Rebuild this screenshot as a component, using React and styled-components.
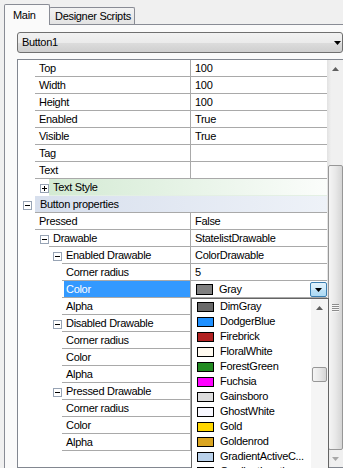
import React from "react";
import styled, { createGlobalStyle } from "styled-components";

const LINE = "#a9a9a9";

const GlobalStyle = createGlobalStyle`
  html, body { margin: 0; padding: 0; }
  body {
    background: #f0f0f0;
    font-family: "Liberation Sans", Arial, sans-serif;
    font-size: 11px;
    letter-spacing: -0.3px;
    color: #000;
  }
  * { box-sizing: border-box; }
`;

const Window = styled.div`
  width: 343px;
  height: 468px;
  overflow: hidden;
  background: #f0f0f0;
`;

const TabStrip = styled.div`
  display: flex;
  align-items: flex-end;
  height: 24px;
  padding-left: 4px;
`;

const Tab = styled.div`
  position: relative;
  z-index: ${(p) => (p.$active ? 2 : 1)};
  width: ${(p) => p.$w}px;
  height: ${(p) => (p.$active ? 21 : 17)}px;
  margin-bottom: ${(p) => (p.$active ? -1 : 0)}px;
  margin-left: ${(p) => (p.$active ? 0 : -1)}px;
  padding-left: ${(p) => (p.$active ? 8 : 5)}px;
  border: 1px solid #898c95;
  border-bottom: none;
  border-radius: 2px 2px 0 0;
  background: ${(p) => (p.$active ? "#fafafa" : "linear-gradient(#f3f3f3, #e3e3e3)")};
  line-height: ${(p) => (p.$active ? 20 : 16)}px;
  white-space: nowrap;
`;

const Page = styled.div`
  height: 444px;
  margin-left: 4px;
  padding: 7px 0 0 12px;
  border-top: 1px solid #898c95;
  border-left: 1px solid #898c95;
  background: #fafafa;
`;

const Combo = styled.div`
  display: flex;
  align-items: center;
  justify-content: space-between;
  height: 21px;
  padding: 0 1px 0 4px;
  border: 1px solid #707070;
  border-radius: 3px;
  background: linear-gradient(#f2f2f2 0%, #ebebeb 50%, #dddddd 50%, #cfcfcf 100%);
  line-height: 19px;
`;

const Grid = styled.div`
  position: relative;
  display: flex;
  width: 328px;
  height: 409px;
  margin-top: 6px;
  border: 1px solid #828790;
  background: #fff;
`;

const Rows = styled.div`
  flex: none;
  width: 309px;
`;

const Row = styled.div`
  display: flex;
  height: 17px;
`;

const Gutter = styled.div`
  flex: none;
  display: flex;
  align-items: center;
  justify-content: flex-end;
  width: ${(p) => p.$w}px;
  padding-right: ${(p) => p.$pad || 0}px;
  padding-top: 1px;
`;

const NameCell = styled.div`
  flex: none;
  display: flex;
  width: ${(p) => 191 - p.$x}px;
  border-right: 1px solid ${LINE};
  border-bottom: 1px solid ${LINE};
`;

const Name = styled.div`
  flex: 1;
  height: 16px;
  margin-left: ${(p) => (p.$selected ? 2 : 0)}px;
  padding: 1px 0 0 ${(p) => (p.$selected ? 2 : 4)}px;
  background: ${(p) => (p.$selected ? "#3399ff" : "transparent")};
  color: ${(p) => (p.$selected ? "#fff" : "#000")};
  line-height: 15px;
  white-space: nowrap;
`;

const ValueCell = styled.div`
  flex: 1;
  display: flex;
  align-items: center;
  padding: 1px 0 0 4px;
  border-bottom: 1px solid ${LINE};
  line-height: 15px;
  white-space: nowrap;
`;

const CategoryBar = styled.div`
  flex: 1;
  padding: 1px 0 0 5px;
  border-bottom: 1px solid ${LINE};
  background: linear-gradient(to right, #d7dfed, #eef2f8);
  line-height: 15px;
`;

const SubBar = styled.div`
  flex: 1;
  padding: 1px 0 0 4px;
  border-bottom: 1px solid #e4f0e4;
  background: linear-gradient(to right, #d3ead3, #fbfdfb);
  line-height: 15px;
`;

const Swatch = styled.span`
  flex: none;
  width: 17px;
  height: ${(p) => p.$h}px;
  margin-left: ${(p) => p.$ml || 0}px;
  border: 1px solid #000;
  background: ${(p) => p.$c};
`;

const SwatchText = styled.span`
  margin-left: 6px;
`;

const DropButton = styled.div`
  display: flex;
  align-items: center;
  justify-content: center;
  width: 17px;
  height: 15px;
  margin-left: auto;
  border: 1px solid #3c7fb1;
  border-radius: 2px;
  background: linear-gradient(#e3f3fc, #cfeafa 50%, #bde2f7 50%, #acd9f3);
`;

const Popup = styled.div`
  position: absolute;
  z-index: 3;
  left: 173px;
  top: 238px;
  display: flex;
  width: 138px;
  height: 190px;
  border: 1px solid #646464;
  background: #fff;
`;

const PopupList = styled.div`
  flex: 1;
  overflow: hidden;
`;

const Item = styled.div`
  display: flex;
  align-items: center;
  height: 15px;
  padding-left: 5px;
  line-height: 15px;
  white-space: nowrap;
`;

const VScroll = styled.div`
  flex: none;
  display: flex;
  flex-direction: column;
  width: 17px;
  background: ${(p) => p.$bg};
`;

const ScrollButton = styled.div`
  flex: none;
  display: flex;
  align-items: center;
  justify-content: center;
  height: 17px;
`;

const Track = styled.div`
  flex: 1;
  padding-top: ${(p) => p.$offset}px;
`;

const Thumb = styled.div`
  display: flex;
  flex-direction: column;
  align-items: center;
  justify-content: center;
  gap: 1px;
  height: ${(p) => p.$h}px;
  margin: 0 1px;
  border: 1px solid #979797;
  border-radius: 2px;
  background: linear-gradient(to right, #f5f5f5, #e8e8e8 50%, #d5d5d5);
`;

const Grip = styled.span`
  width: 7px;
  height: 1px;
  background: #8c8c8c;
  box-shadow: 0 1px 0 #f6f6f6;
`;

const Arrow = ({ up, color = "#000" }) => (
  <svg width="7" height="4" viewBox="0 0 7 4">
    <polygon points={up ? "0,4 7,4 3.5,0" : "0,0 7,0 3.5,4"} fill={color} />
  </svg>
);

const Glyph = ({ open }) => (
  <svg width="9" height="9" viewBox="0 0 9 9">
    <rect x="0.5" y="0.5" width="8" height="8" fill="#fff" stroke="#97a3b4" />
    <line x1="2" y1="4.5" x2="7" y2="4.5" stroke="#000" />
    {!open && <line x1="4.5" y1="2" x2="4.5" y2="7" stroke="#000" />}
  </svg>
);

const rows = [
  { label: "Top", value: "100", x: 35 },
  { label: "Width", value: "100", x: 35 },
  { label: "Height", value: "100", x: 35 },
  { label: "Enabled", value: "True", x: 35 },
  { label: "Visible", value: "True", x: 35 },
  { label: "Tag", value: "", x: 35 },
  { label: "Text", value: "", x: 35 },
  { kind: "sub", label: "Text Style" },
  { kind: "cat", label: "Button properties" },
  { label: "Pressed", value: "False", x: 35 },
  { label: "Drawable", value: "StatelistDrawable", x: 49, glyph: true },
  { label: "Enabled Drawable", value: "ColorDrawable", x: 62, glyph: true },
  { label: "Corner radius", value: "5", x: 62 },
  { label: "Color", color: "#808080", value: "Gray", x: 62, selected: true },
  { label: "Alpha", value: "", x: 62 },
  { label: "Disabled Drawable", value: "", x: 62, glyph: true },
  { label: "Corner radius", value: "", x: 62 },
  { label: "Color", value: "", x: 62 },
  { label: "Alpha", value: "", x: 62 },
  { label: "Pressed Drawable", value: "", x: 62, glyph: true },
  { label: "Corner radius", value: "", x: 62 },
  { label: "Color", value: "", x: 62 },
  { label: "Alpha", value: "", x: 62 },
];

const colors = [
  ["DimGray", "#696969"],
  ["DodgerBlue", "#1e90ff"],
  ["Firebrick", "#b22222"],
  ["FloralWhite", "#fffaf0"],
  ["ForestGreen", "#228b22"],
  ["Fuchsia", "#ff00ff"],
  ["Gainsboro", "#dcdcdc"],
  ["GhostWhite", "#f8f8ff"],
  ["Gold", "#ffd700"],
  ["Goldenrod", "#daa520"],
  ["GradientActiveC...", "#b9d1ea"],
  ["GradientInactiv...", "#d7e4f2"],
];

const PropRow = ({ row }) => {
  if (row.kind === "cat") {
    return (
      <Row>
        <Gutter $w={17} $pad={3}>
          <Glyph open />
        </Gutter>
        <CategoryBar>{row.label}</CategoryBar>
      </Row>
    );
  }
  if (row.kind === "sub") {
    return (
      <Row>
        <Gutter $w={31}>
          <Glyph />
        </Gutter>
        <SubBar>{row.label}</SubBar>
      </Row>
    );
  }
  return (
    <Row>
      <Gutter $w={row.x - 18}>{row.glyph && <Glyph open />}</Gutter>
      <NameCell $x={row.x}>
        <Name $selected={row.selected}>{row.label}</Name>
      </NameCell>
      <ValueCell>
        {row.color ? (
          <>
            <Swatch $c={row.color} $h={11} $ml={1} />
            <SwatchText>{row.value}</SwatchText>
            <DropButton>
              <Arrow />
            </DropButton>
          </>
        ) : (
          row.value
        )}
      </ValueCell>
    </Row>
  );
};

export default function App() {
  return (
    <Window>
      <GlobalStyle />
      <TabStrip>
        <Tab $active $w={46}>
          Main
        </Tab>
        <Tab $w={86}>Designer Scripts</Tab>
      </TabStrip>
      <Page>
        <Combo>
          <span>Button1</span>
          <Arrow />
        </Combo>
        <Grid>
          <Rows>
            {rows.map((row, i) => (
              <PropRow key={i} row={row} />
            ))}
          </Rows>
          <VScroll $bg="linear-gradient(to right, #e2e2e2, #f0f0f0 25%, #f0f0f0)">
            <ScrollButton>
              <Arrow up color="#5f5f5f" />
            </ScrollButton>
            <Track $offset={88}>
              <Thumb $h={285}>
                <Grip />
                <Grip />
                <Grip />
                <Grip />
              </Thumb>
            </Track>
            <ScrollButton>
              <Arrow color="#a8a8a8" />
            </ScrollButton>
          </VScroll>
          <Popup>
            <PopupList>
              {colors.map(([name, c]) => (
                <Item key={name}>
                  <Swatch $c={c} $h={10} />
                  <SwatchText>{name}</SwatchText>
                </Item>
              ))}
            </PopupList>
            <VScroll $bg="#f5f5f5">
              <ScrollButton>
                <Arrow up color="#5f5f5f" />
              </ScrollButton>
              <Track $offset={51}>
                <Thumb $h={15} />
              </Track>
            </VScroll>
          </Popup>
        </Grid>
      </Page>
    </Window>
  );
}
